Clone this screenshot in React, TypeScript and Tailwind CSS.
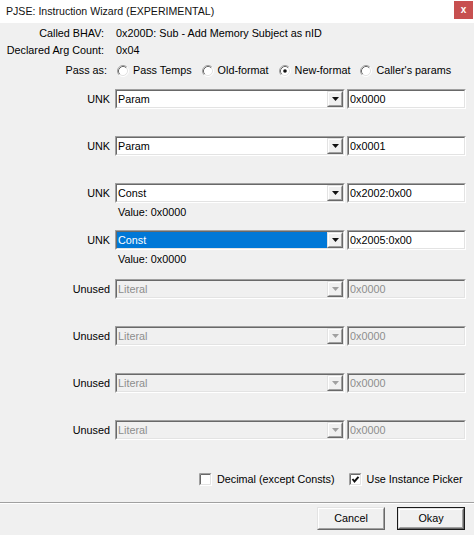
import React from 'react';

const sunkenOuter = "border border-t-[#a0a0a0] border-l-[#a0a0a0] border-b-white border-r-white";
const sunkenInner = "border border-t-[#696969] border-l-[#696969] border-b-[#e3e3e3] border-r-[#e3e3e3]";
const raisedOuter = "border border-t-[#e3e3e3] border-l-[#e3e3e3] border-b-[#696969] border-r-[#696969]";
const raisedInner = "border border-t-white border-l-white border-b-[#a0a0a0] border-r-[#a0a0a0]";

const Radio = ({ checked }: { checked?: boolean }) => (
    <svg width="12" height="12" viewBox="0 0 12 12" className="shrink-0">
        <circle cx="6" cy="6" r="5" fill="white" />
        <path d="M2.11 9.89 A5.5 5.5 0 0 1 9.89 2.11" stroke="#a0a0a0" fill="none" />
        <path d="M9.89 2.11 A5.5 5.5 0 0 1 2.11 9.89" stroke="#ffffff" fill="none" />
        <path d="M2.82 9.18 A4.5 4.5 0 0 1 9.18 2.82" stroke="#696969" fill="none" />
        <path d="M9.18 2.82 A4.5 4.5 0 0 1 2.82 9.18" stroke="#e3e3e3" fill="none" />
        {checked && <circle cx="6" cy="6" r="1.8" fill="#111" />}
    </svg>
);

const Checkbox = ({ checked }: { checked?: boolean }) => (
    <svg width="13" height="13" viewBox="0 0 13 13" className="shrink-0">
        <rect x="0" y="0" width="13" height="13" fill="white" />
        <path d="M0.5 12.5 V0.5 H12.5" stroke="#a0a0a0" fill="none" />
        <path d="M12.5 0.5 V12.5 H0.5" stroke="#ffffff" fill="none" />
        <path d="M1.5 11.5 V1.5 H11.5" stroke="#696969" fill="none" />
        <path d="M11.5 1.5 V11.5 H1.5" stroke="#e3e3e3" fill="none" />
        {checked && (
            <path d="M3.5 6 L5.5 8.5 L9.5 3.8" stroke="#111" strokeWidth="2" fill="none" />
        )}
    </svg>
);

const DropButton = ({ disabled }: { disabled?: boolean }) => (
    <div className={`w-[16px] h-full shrink-0 bg-[#f0f0f0] ${raisedOuter}`}>
        <div className={`w-full h-full flex items-center justify-center ${raisedInner}`}>
            <svg width="7" height="4" viewBox="0 0 7 4">
                <path d="M0 0 H7 L3.5 4 Z" fill={disabled ? '#a0a0a0' : '#111'} />
            </svg>
        </div>
    </div>
);

const Combo = ({ value, selected, disabled }: { value: string; selected?: boolean; disabled?: boolean }) => (
    <div className={`w-[230px] h-[20px] shrink-0 ${sunkenOuter}`}>
        <div className={`h-full flex ${sunkenInner} ${disabled ? 'bg-[#f0f0f0]' : 'bg-white'}`}>
            <div
                className={`flex-1 flex items-center pl-[1px] ${
                    selected ? 'bg-[#0078d7] text-white' : disabled ? 'text-[#8d8d8d]' : 'text-black'
                }`}
            >
                {value}
            </div>
            <DropButton disabled={disabled} />
        </div>
    </div>
);

const TextBox = ({ value, disabled }: { value: string; disabled?: boolean }) => (
    <div className={`w-[119px] h-[20px] shrink-0 ${sunkenOuter}`}>
        <div
            className={`h-full flex items-center pl-[1px] ${sunkenInner} ${
                disabled ? 'bg-[#f0f0f0] text-[#8d8d8d]' : 'bg-white text-black'
            }`}
        >
            {value}
        </div>
    </div>
);

interface ArgRow {
    label: string;
    type: string;
    value: string;
    note?: string;
    selected?: boolean;
    disabled?: boolean;
}

const rows: ArgRow[] = [
    { label: 'UNK', type: 'Param', value: '0x0000' },
    { label: 'UNK', type: 'Param', value: '0x0001' },
    { label: 'UNK', type: 'Const', value: '0x2002:0x00', note: 'Value: 0x0000' },
    { label: 'UNK', type: 'Const', value: '0x2005:0x00', note: 'Value: 0x0000', selected: true },
    { label: 'Unused', type: 'Literal', value: '0x0000', disabled: true },
    { label: 'Unused', type: 'Literal', value: '0x0000', disabled: true },
    { label: 'Unused', type: 'Literal', value: '0x0000', disabled: true },
    { label: 'Unused', type: 'Literal', value: '0x0000', disabled: true },
];

const passOptions = [
    { label: 'Pass Temps' },
    { label: 'Old-format' },
    { label: 'New-format', checked: true },
    { label: "Caller's params" },
];

const DialogButton = ({ label, isDefault }: { label: string; isDefault?: boolean }) => (
    <div className={`w-[68px] h-[23px] ${isDefault ? 'border border-[#1a1a1a]' : ''}`}>
        <div className={`w-full h-full bg-[#f0f0f0] ${raisedOuter}`}>
            <div className={`w-full h-full flex items-center justify-center ${raisedInner}`}>{label}</div>
        </div>
    </div>
);

export default function App() {
    return (
        <div className="w-[474px] h-[535px] bg-[#f0f0f0] text-[10.8px] text-black flex flex-col overflow-hidden font-['Liberation_Sans',Arial,sans-serif]">
            {/* Title bar */}
            <div className="h-[23px] bg-white flex items-center justify-between pl-[6px] pr-[1px]">
                <span className="text-[10.6px] text-[#111]">PJSE: Instruction Wizard (EXPERIMENTAL)</span>
                <div className="w-[19px] h-[18px] mb-[3px] bg-[#c75050] flex items-center justify-center text-white text-[10px] font-bold leading-none">
                    x
                </div>
            </div>

            {/* Header info */}
            <div className="mt-[2px] flex flex-col">
                <div className="h-[17px] flex items-center">
                    <span className="w-[104px] text-right">Called BHAV:</span>
                    <span className="ml-[12px]">0x200D: Sub - Add Memory Subject as nID</span>
                </div>
                <div className="h-[17px] flex items-center">
                    <span className="w-[104px] text-right">Declared Arg Count:</span>
                    <span className="ml-[12px]">0x04</span>
                </div>
                <div className="mt-[3px] h-[17px] flex items-center">
                    <span className="w-[107px] text-right">Pass as:</span>
                    <div className="ml-[10px] flex items-center gap-[10px]">
                        {passOptions.map((o) => (
                            <label key={o.label} className="flex items-center gap-[4px]">
                                <Radio checked={o.checked} />
                                <span>{o.label}</span>
                            </label>
                        ))}
                    </div>
                </div>
            </div>

            {/* Argument rows */}
            <div className="mt-[10px] flex flex-col">
                {rows.map((r, i) => (
                    <div key={i} className={`flex flex-col ${i === 3 ? 'h-[49px]' : 'h-[47px]'}`}>
                        <div className="h-[20px] flex items-center">
                            <span className="w-[110px] text-right">{r.label}</span>
                            <div className="ml-[5px] flex gap-[2px]">
                                <Combo value={r.type} selected={r.selected} disabled={r.disabled} />
                                <TextBox value={r.value} disabled={r.disabled} />
                            </div>
                        </div>
                        {r.note && <div className="h-[18px] flex items-center pl-[118px]">{r.note}</div>}
                    </div>
                ))}
            </div>

            {/* Options */}
            <div className="mt-[4px] h-[17px] flex items-center pl-[199px]">
                <label className="flex items-center gap-[5px]">
                    <Checkbox />
                    <span>Decimal (except Consts)</span>
                </label>
                <label className="ml-[14px] flex items-center gap-[5px]">
                    <Checkbox checked />
                    <span>Use Instance Picker</span>
                </label>
            </div>

            {/* Separator */}
            <div className="mt-[14px] h-[2px] border-t border-t-[#a0a0a0] border-b border-b-white" />

            {/* Buttons */}
            <div className="mt-[3px] flex justify-end gap-[12px] pr-[9px]">
                <DialogButton label="Cancel" />
                <DialogButton label="Okay" isDefault />
            </div>
        </div>
    );
}
